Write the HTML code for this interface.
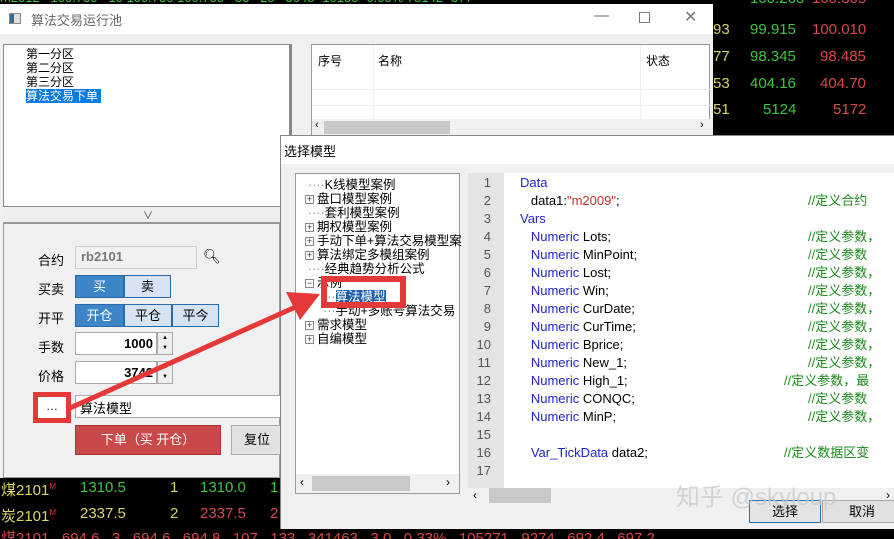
<!DOCTYPE html>
<html style="width:894px;height:539px;overflow:hidden"><head><meta charset="utf-8">
<style>
*{margin:0;padding:0;box-sizing:border-box}
body{width:894px;height:539px;background:#000;position:relative;overflow:hidden;font-family:"Liberation Sans","Noto Sans CJK SC",sans-serif;font-size:12px;color:#000}
.a{position:absolute}
.q{font-size:15px;white-space:nowrap}
.g{color:#3fc53f}.r{color:#d94848}.y{color:#d9d36a}
.tree div{height:14px;line-height:14px;white-space:nowrap}
.code div{height:18px;line-height:18px;white-space:nowrap;font-size:13px}
.b{color:#2222cc}.gr{color:#1b8a1b}.rs{color:#c03030}
.ln div{height:18px;line-height:18px;text-align:right;font-size:13px;color:#555}
.pm{display:inline-block;width:9px;height:9px;border:1px solid #888;font-size:9px;line-height:7px;text-align:center;color:#333;margin-right:3px;vertical-align:middle;background:#fff}
</style></head><body>
<div class="a q" style="left:0;top:-10px;color:#3fc53f;font-size:13px">m2012 &nbsp; 100.730 &nbsp; 10 100.730 100.735 &nbsp; 33 &nbsp; 25 &nbsp; 3048 -10155 -0.05% 75142 -377</div>
<div class="a q y" style="left:713px;top:21px">93</div><div class="a q g" style="left:750px;top:21px">99.915</div><div class="a q r" style="left:812px;top:21px">100.010</div>
<div class="a q y" style="left:713px;top:48px">77</div><div class="a q g" style="left:750px;top:48px">98.345</div><div class="a q r" style="left:820px;top:48px">98.485</div>
<div class="a q y" style="left:713px;top:75px">53</div><div class="a q g" style="left:750px;top:75px">404.16</div><div class="a q r" style="left:820px;top:75px">404.70</div>
<div class="a q y" style="left:713px;top:101px">51</div><div class="a q g" style="left:763px;top:101px">5124</div><div class="a q r" style="left:833px;top:101px">5172</div>
<div class="a q r" style="top:-10px;left:812px">100.305</div>
<div class="a q g" style="left:750px;top:-10px">100.263</div>
<div class="a q y" style="left:1px;top:479px">煤2101<sup style="font-size:8px;color:#d33">M</sup></div>
<div class="a q g" style="left:80px;top:479px">1310.5</div><div class="a q y" style="left:170px;top:479px">1</div><div class="a q g" style="left:200px;top:479px">1310.0</div><div class="a q g" style="left:270px;top:479px">1</div>
<div class="a q y" style="left:1px;top:505px">炭2101<sup style="font-size:8px;color:#d33">M</sup></div>
<div class="a q y" style="left:80px;top:505px">2337.5</div><div class="a q y" style="left:170px;top:505px">2</div><div class="a q r" style="left:200px;top:505px">2337.5</div><div class="a q r" style="left:270px;top:505px">2</div>
<div class="a q r" style="left:1px;top:531px;line-height:15px">煤2101 &nbsp; 694.6 &nbsp; 3 &nbsp; 694.6 &nbsp; 694.8 &nbsp; 107 &nbsp; 133 &nbsp; 341463 &nbsp; 3.0 &nbsp; 0.33% &nbsp; 105271 &nbsp; 9274 &nbsp; 692.4 &nbsp; 697.2</div>

<div class="a" style="left:0;top:4px;width:713px;height:474px;background:#f0f0f0">
 <div class="a" style="left:0;top:0;width:713px;height:30px;background:#fff"></div>
 <div class="a" style="left:9px;top:9px;width:12px;height:11px;border:1px solid #888;background:linear-gradient(90deg,#3b6b8a 40%,#ddd 40%)"></div>
 <div class="a" style="left:31px;top:6px;font-size:13px;color:#666">算法交易运行池</div>
 <div class="a" style="left:594px;top:3px;font-size:15px;color:#666">—</div>
 <div class="a" style="left:639px;top:8px;width:11px;height:11px;border:1px solid #777"></div>
 <div class="a" style="left:684px;top:3px;font-size:16px;color:#777">✕</div>
 <div class="a" style="left:3px;top:40px;width:289px;height:163px;background:#fff;border:1px solid #888;border-right:3px solid #888">
  <div class="a tree" style="left:22px;top:2px;font-size:12px">
   <div>第一分区</div><div>第二分区</div><div>第三分区</div><div><span style="background:#0a7be0;color:#fff;padding-right:3px">算法交易下单</span></div>
  </div>
 </div>
 <div class="a" style="left:3px;top:203px;width:290px;height:16px;background:#eee;border-bottom:1px solid #999;text-align:center;font-size:10px;color:#333">∨</div>
 <div class="a" style="left:311px;top:40px;width:399px;height:92px;background:#fff;border:1px solid #999">
  <div class="a" style="left:6px;top:7px">序号</div><div class="a" style="left:66px;top:7px">名称</div><div class="a" style="left:334px;top:7px">状态</div>
  <div class="a" style="left:61px;top:0;width:1px;height:74px;background:#eee"></div>
  <div class="a" style="left:328px;top:0;width:1px;height:74px;background:#eee"></div>
  <div class="a" style="left:0;top:44px;width:399px;height:1px;background:#eee"></div>
  <div class="a" style="left:0;top:60px;width:399px;height:1px;background:#eee"></div>
  <div class="a" style="left:0;top:74px;width:399px;height:17px;background:#f0f0f0"></div>
  <div class="a" style="left:12px;top:76px;width:126px;height:13px;background:#c8c8c8"></div>
  <div class="a" style="left:3px;top:74px;font-size:11px">‹</div><div class="a" style="left:388px;top:74px;font-size:11px">›</div>
 </div>
 <div class="a" style="left:3px;top:219px;width:277px;height:255px;border:1px solid #999;background:#f0f0f0">
  <div class="a" style="left:34px;top:26px;font-size:13px">合约</div>
  <div class="a" style="left:71px;top:22px;width:122px;height:23px;border:1px solid #ccc;background:#f2f2f2;font-weight:bold;color:#777;padding:2px 5px;font-size:13px">rb2101</div>
  <div class="a" style="left:199px;top:24px;font-size:14px">🔍︎</div>
  <div class="a" style="left:34px;top:55px;font-size:13px">买卖</div>
  <div class="a" style="left:71px;top:51px;width:49px;height:23px;background:#3d85c6;border:1px solid #2a6aa6;color:#fff;text-align:center;line-height:21px;font-size:13px">买</div>
  <div class="a" style="left:120px;top:51px;width:47px;height:23px;background:#d6e3f2;border:1px solid #2a6aa6;text-align:center;line-height:21px;font-size:13px">卖</div>
  <div class="a" style="left:34px;top:84px;font-size:13px">开平</div>
  <div class="a" style="left:71px;top:80px;width:49px;height:23px;background:#3d85c6;border:1px solid #2a6aa6;color:#fff;text-align:center;line-height:21px;font-size:13px">开仓</div>
  <div class="a" style="left:120px;top:80px;width:48px;height:23px;background:#d6e3f2;border:1px solid #2a6aa6;text-align:center;line-height:21px;font-size:13px">平仓</div>
  <div class="a" style="left:168px;top:80px;width:47px;height:23px;background:#d6e3f2;border:1px solid #2a6aa6;text-align:center;line-height:21px;font-size:13px">平今</div>
  <div class="a" style="left:34px;top:113px;font-size:13px">手数</div>
  <div class="a" style="left:71px;top:108px;width:82px;height:23px;border:1px solid #aaa;background:#fff;text-align:right;font-weight:bold;padding:3px 3px;font-size:13px">1000</div>
  <div class="a" style="left:153px;top:108px;width:16px;height:23px;border:1px solid #aaa;background:#eee;font-size:6px;text-align:center;line-height:10px">▲<br>▼</div>
  <div class="a" style="left:34px;top:142px;font-size:13px">价格</div>
  <div class="a" style="left:71px;top:137px;width:82px;height:23px;border:1px solid #aaa;background:#fff;text-align:right;font-weight:bold;padding:3px 3px;font-size:13px">3742</div>
  <div class="a" style="left:153px;top:137px;width:16px;height:23px;border:1px solid #aaa;background:#eee;font-size:6px;text-align:center;line-height:10px">▲<br>▼</div>
  <div class="a" style="left:29px;top:168px;width:38px;height:31px;border:5px solid #e53838;background:#fff;text-align:center;line-height:18px;font-size:12px">…</div>
  <div class="a" style="left:71px;top:171px;width:210px;height:23px;border:1px solid #aaa;background:#fff;padding:2px 4px;font-size:13px">算法模型</div>
  <div class="a" style="left:71px;top:201px;width:146px;height:30px;background:#c9484a;border:1px solid #a33;color:#fff;text-align:center;line-height:28px;font-size:13px">下单（买 开仓）</div>
  <div class="a" style="left:227px;top:201px;width:60px;height:30px;background:#e1e1e1;border:1px solid #aaa;text-align:center;line-height:28px;font-size:13px;padding-right:8px">复位</div>
 </div>
</div>

<div class="a" style="left:280px;top:135px;width:614px;height:394px;background:#f0f0f0;border-left:1px solid #888;border-top:1px solid #888">
 <div class="a" style="left:0;top:0;width:614px;height:28px;background:#fff"></div>
 <div class="a" style="left:3px;top:5px;font-size:13px">选择模型</div>
 <div class="a" style="left:14px;top:37px;width:165px;height:321px;border:1px solid #999;background:#fff">
  <div class="a tree" style="left:9px;top:4px;font-size:12.5px">
   <div><span style="color:#999;margin-left:3px">····</span>K线模型案例</div>
   <div><span class="pm">+</span>盘口模型案例</div>
   <div><span style="color:#999;margin-left:3px">····</span>套利模型案例</div>
   <div><span class="pm">+</span>期权模型案例</div>
   <div><span class="pm">+</span>手动下单+算法交易模型案</div>
   <div><span class="pm">+</span>算法绑定多模组案例</div>
   <div><span style="color:#999;margin-left:3px">····</span>经典趋势分析公式</div>
   <div><span class="pm">−</span>示例</div>
   <div style="padding-left:18px"><span style="color:#999">···</span><span style="background:#1e5ea8;color:#fff">算法模型</span></div>
   <div style="padding-left:18px"><span style="color:#999">···</span>手动+多账号算法交易</div>
   <div><span class="pm">+</span>需求模型</div>
   <div><span class="pm">+</span>自编模型</div>
  </div>
  <div class="a" style="left:0;top:300px;width:163px;height:19px;background:#f0f0f0"></div>
  <div class="a" style="left:16px;top:302px;width:98px;height:15px;background:#c8c8c8"></div>
  <div class="a" style="left:4px;top:301px">‹</div><div class="a" style="left:150px;top:301px">›</div>
 </div>
 <div class="a" style="left:40px;top:140px;width:85px;height:32px;border:6px solid #e53838"></div>
 <div class="a" style="left:187px;top:37px;width:427px;height:315px;background:#fff">
  <div class="a ln" style="left:0;top:0;width:36px;height:315px;background:#e4e4e4;padding:1px 13px 0 0">
   <div>1</div><div>2</div><div>3</div><div>4</div><div>5</div><div>6</div><div>7</div><div>8</div><div>9</div><div>10</div><div>11</div><div>12</div><div>13</div><div>14</div><div>15</div><div>16</div><div>17</div>
  </div>
  <div class="a code" style="left:52px;top:1px">
   <div class="b">Data</div>
   <div>&nbsp;&nbsp;&nbsp;data1:<span class="rs">"m2009"</span>;</div>
   <div class="b">Vars</div>
   <div>&nbsp;&nbsp;&nbsp;<span class="b">Numeric</span> Lots;</div>
   <div>&nbsp;&nbsp;&nbsp;<span class="b">Numeric</span> MinPoint;</div>
   <div>&nbsp;&nbsp;&nbsp;<span class="b">Numeric</span> Lost;</div>
   <div>&nbsp;&nbsp;&nbsp;<span class="b">Numeric</span> Win;</div>
   <div>&nbsp;&nbsp;&nbsp;<span class="b">Numeric</span> CurDate;</div>
   <div>&nbsp;&nbsp;&nbsp;<span class="b">Numeric</span> CurTime;</div>
   <div>&nbsp;&nbsp;&nbsp;<span class="b">Numeric</span> Bprice;</div>
   <div>&nbsp;&nbsp;&nbsp;<span class="b">Numeric</span> New_1;</div>
   <div>&nbsp;&nbsp;&nbsp;<span class="b">Numeric</span> High_1;</div>
   <div>&nbsp;&nbsp;&nbsp;<span class="b">Numeric</span> CONQC;</div>
   <div>&nbsp;&nbsp;&nbsp;<span class="b">Numeric</span> MinP;</div>
   <div>&nbsp;</div>
   <div>&nbsp;&nbsp;&nbsp;<span class="b">Var_TickData</span> data2;</div>
  </div>
  <div class="a code gr" style="left:340px;top:1px">
   <div>&nbsp;</div><div>//定义合约</div><div>&nbsp;</div>
   <div>//定义参数，</div><div>//定义参数</div><div>//定义参数，</div><div>//定义参数，</div><div>//定义参数，</div><div>//定义参数，</div><div>//定义参数，</div><div>//定义参数，</div>
   <div style="margin-left:-24px">//定义参数，最</div><div>//定义参数</div><div>//定义参数，</div><div>&nbsp;</div>
   <div style="margin-left:-24px">//定义数据区变</div>
  </div>
 </div>
 <div class="a" style="left:187px;top:352px;width:427px;height:16px;background:#f0f0f0"></div>
 <div class="a" style="left:208px;top:352px;width:62px;height:15px;background:#c8c8c8"></div>
 <div class="a" style="left:192px;top:352px">‹</div><div class="a" style="left:605px;top:352px">›</div>
 <div class="a" style="left:468px;top:364px;width:72px;height:23px;border:1px solid #2a72b8;background:#e4e4e4;text-align:center;line-height:21px;font-size:13px">选择</div>
 <div class="a" style="left:541px;top:364px;width:80px;height:23px;border:1px solid #aaa;background:#e1e1e1;text-align:center;line-height:21px;font-size:13px">取消</div>
 <div class="a" style="left:395px;top:341px;font-size:24px;color:rgba(200,200,200,0.75);white-space:nowrap">知乎 @skyloup</div>
</div>

<svg class="a" style="left:0;top:0" width="894" height="539">
 <line x1="70" y1="408" x2="300" y2="305" stroke="#e53838" stroke-width="5"/>
 <polygon points="320,294 286,292 300,320" fill="#e53838"/>
</svg>
</body></html>
